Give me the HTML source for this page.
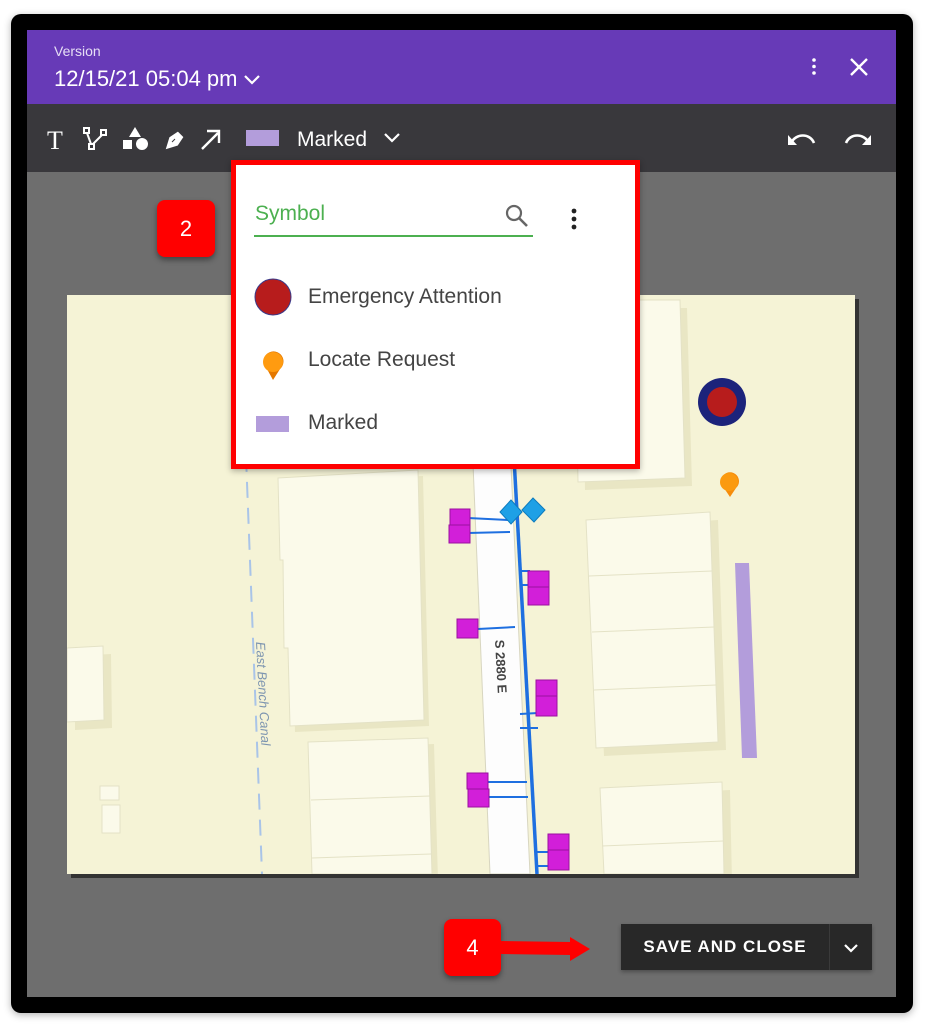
<!DOCTYPE html>
<html><head><meta charset="utf-8"><style>
*{margin:0;padding:0;box-sizing:border-box}
body{width:930px;height:1035px;background:#fff;position:relative;overflow:hidden;font-family:"Liberation Sans",sans-serif}
.a{position:absolute}
</style></head><body>
<div class="a" style="left:11px;top:14px;width:902px;height:999px;background:#000;border-radius:10px;box-shadow:0 2px 8px rgba(0,0,0,.3)"></div>
<div class="a" style="left:27px;top:30px;width:869px;height:74px;background:#673ab7"></div>
<div class="a" style="left:54px;top:43px;color:#e6def5;font-size:14px">Version</div>
<div class="a" style="left:54px;top:66px;color:#fff;font-size:22px">12/15/21 05:04 pm</div>
<svg class="a" style="left:0;top:0" width="930" height="1035">
 <polyline points="245,76 252,83 259,76" fill="none" stroke="#fff" stroke-width="2.2"/>
 <circle cx="814" cy="60" r="1.8" fill="#fff"/><circle cx="814" cy="66.5" r="1.8" fill="#fff"/><circle cx="814" cy="73" r="1.8" fill="#fff"/>
 <path d="M851 59 L867 75 M867 59 L851 75" stroke="#fff" stroke-width="2.4"/>
</svg>
<div class="a" style="left:27px;top:104px;width:869px;height:68px;background:#39383c"></div>
<div class="a" style="left:27px;top:172px;width:869px;height:825px;background:#6e6e6e"></div>
<svg class="a" style="left:0;top:0" width="930" height="1035">
 <text x="47" y="149" fill="#fff" font-family="Liberation Serif" font-size="26">T</text>
 <g stroke="#fff" stroke-width="2" fill="none"><rect x="84" y="128" width="5" height="5"/><rect x="101" y="130" width="5" height="5"/><rect x="89" y="144" width="5" height="5"/><path d="M87 133 L91 144 M93 144 L102 135"/></g>
 <path d="M135 127 L141 137 L129 137Z" fill="#fff"/><rect x="123" y="140" width="9" height="9" fill="#fff"/><circle cx="142" cy="144" r="6" fill="#fff"/>
 <path d="M165 150 L169 137 L178 131 L184 137 L178 146Z M172 142 L175 139" fill="#fff" stroke="#39383c" stroke-width="1"/>
 <path d="M202 149 L218 133 M207 131 L219 131 L219 143" stroke="#fff" stroke-width="2.4" fill="none"/>
 <rect x="246" y="130" width="33" height="16" fill="#b39ddb"/>
 <text x="297" y="146" fill="#fff" font-size="21">Marked</text>
 <polyline points="385,134 392,141 399,134" fill="none" stroke="#fff" stroke-width="2.2"/>
 <path d="M791 143 C796 133 810 133 814 143" stroke="#fff" stroke-width="2.6" fill="none"/><path d="M788 135 L788 145 L797 145Z" fill="#fff"/>
 <path d="M846 143 C850 133 864 133 869 143" stroke="#fff" stroke-width="2.6" fill="none"/><path d="M871 135 L871 145 L862 145Z" fill="#fff"/>
</svg>
<div class="a" style="left:71px;top:299px;width:788px;height:579px;background:#333"></div>
<svg class="a" style="left:67px;top:295px" width="788" height="579" viewBox="67 295 788 579">
 <rect x="67" y="295" width="788" height="579" fill="#f5f3d6"/>
 <g fill="#e9e6c4">
  <path d="M278 478 L418 470 L424 720 L290 726 L288 648 L284 648 L283 560 L280 560Z" transform="translate(5,6)"/>
  <path d="M308 742 L428 738 L432 874 L312 874Z" transform="translate(6,6)"/>
  <path d="M586 520 L710 512 L718 742 L596 748Z" transform="translate(8,8)"/>
  <path d="M600 788 L722 782 L724 874 L604 874Z" transform="translate(8,8)"/>
  <path d="M67 648 L103 646 L104 720 L67 722Z" transform="translate(8,8)"/>
  <path d="M575 300 L680 300 L685 478 L578 482Z" transform="translate(7,8)"/>
 </g>
 <g fill="#fbfaea" stroke="#e4e2c6" stroke-width="1">
  <path d="M278 478 L418 470 L424 720 L290 726 L288 648 L284 648 L283 560 L280 560Z"/>
  <path d="M308 742 L428 738 L432 874 L312 874Z"/><path d="M311 800 L430 796 M312 858 L431 854"/>
  <path d="M586 520 L710 512 L718 742 L596 748Z"/><path d="M589 576 L712 571 M592 632 L714 627 M594 690 L716 685"/>
  <path d="M600 788 L722 782 L724 874 L604 874Z"/><path d="M602 846 L723 841"/>
  <path d="M67 648 L103 646 L104 720 L67 722Z"/>
  <path d="M575 300 L680 300 L685 478 L578 482Z"/>
  <rect x="100" y="786" width="19" height="14"/><rect x="102" y="805" width="18" height="28"/>
 </g>
 <path d="M240 300 L262 874" stroke="#a9c4e8" stroke-width="2" stroke-dasharray="16,10"/>
 <text transform="translate(256,642) rotate(87)" fill="#7d95b0" font-size="13" font-style="italic">East Bench Canal</text>
 <path d="M466 295 L503 295 L530 874 L490 874Z" fill="#fdfdfd" stroke="#d8d6c0"/>
 <text transform="translate(495,640) rotate(87)" fill="#444" font-size="13" font-weight="bold">S 2880 E</text>
 <path d="M505 295 L537 874" stroke="#1e6fe0" stroke-width="3.5"/>
 <g stroke="#1e6fe0" stroke-width="2"><path d="M468 518 L508 520 M468 533 L510 532 M520 571 L530 571 M520 585 L530 585 M478 629 L515 627 M520 714 L538 713 M520 728 L538 728 M484 782 L527 782 M484 797 L528 797 M535 852 L548 852 M535 866 L548 866"/></g>
 <g fill="#d21fd9" stroke="#9a109f" stroke-width="1">
  <rect x="450" y="509" width="20" height="17"/><rect x="449" y="525" width="21" height="18"/>
  <rect x="528" y="571" width="21" height="16"/><rect x="528" y="587" width="21" height="18"/>
  <rect x="457" y="619" width="21" height="19"/>
  <rect x="536" y="680" width="21" height="16"/><rect x="536" y="696" width="21" height="20"/>
  <rect x="467" y="773" width="21" height="16"/><rect x="468" y="789" width="21" height="18"/>
  <rect x="548" y="834" width="21" height="16"/><rect x="548" y="850" width="21" height="20"/>
 </g>
 <path d="M511 500 L522 512 L511 524 L500 512Z M533 498 L545 510 L534 522 L522 510Z" fill="#1ea0e6" stroke="#0d7bbd"/>
 <circle cx="722" cy="402" r="24" fill="#1c237b"/><circle cx="722" cy="402" r="15" fill="#b71c1c"/>
 <path d="M730 497 L724 488 A9 9 0 1 1 736 488Z" fill="#f68c0c"/><circle cx="729" cy="482" r="9" fill="#fb9a10"/>
 <path d="M735 563 L749 563 L757 758 L742 758Z" fill="#b39ddb"/>
</svg>
<div class="a" style="left:231px;top:160px;width:409px;height:309px;border:5px solid #ff0000;background:#fff;box-shadow:0 2px 6px rgba(0,0,0,.3)"></div>
<div class="a" style="left:255px;top:202px;color:#4cb050;font-size:21px">Symbol</div>
<div class="a" style="left:254px;top:235px;width:279px;height:2px;background:#4cb050"></div>
<svg class="a" style="left:0;top:0" width="930" height="1035">
 <circle cx="514" cy="213" r="7" fill="none" stroke="#666" stroke-width="2.2"/><path d="M519 218 L527 226" stroke="#666" stroke-width="2.6"/>
 <circle cx="574" cy="211" r="2.4" fill="#222"/><circle cx="574" cy="219" r="2.4" fill="#222"/><circle cx="574" cy="227" r="2.4" fill="#222"/>
 <circle cx="273" cy="297" r="18" fill="#b71c1c" stroke="#3a3a8a" stroke-width="1"/>
 <path d="M273 380 L267 369 A10 10 0 1 1 280 369Z" fill="#e47800"/><circle cx="273" cy="362" r="10" fill="#ff9b10"/>
 <rect x="256" y="416" width="33" height="16" fill="#b39ddb"/>
</svg>
<div class="a" style="left:308px;top:285px;color:#444;font-size:21px">Emergency Attention</div>
<div class="a" style="left:308px;top:348px;color:#444;font-size:21px">Locate Request</div>
<div class="a" style="left:308px;top:411px;color:#444;font-size:21px">Marked</div>
<div class="a" style="left:157px;top:200px;width:58px;height:57px;background:#ff0000;border-radius:8px;color:#fff;font-size:22px;text-align:center;line-height:57px;box-shadow:0 3px 6px rgba(0,0,0,.4)">2</div>
<div class="a" style="left:444px;top:919px;width:57px;height:57px;background:#ff0000;border-radius:8px;color:#fff;font-size:22px;text-align:center;line-height:57px;box-shadow:0 3px 6px rgba(0,0,0,.4)">4</div>
<svg class="a" style="left:0;top:0" width="930" height="1035"><path d="M501 941 L570 942 L570 937 L590 949 L570 961 L570 955 L501 954Z" fill="#ff0000"/></svg>
<div class="a" style="left:621px;top:924px;width:251px;height:46px;background:#282828;box-shadow:0 2px 4px rgba(0,0,0,.3)"></div>
<div class="a" style="left:829px;top:924px;width:1px;height:46px;background:#3a3a3a"></div>
<div class="a" style="left:621px;top:924px;width:208px;height:46px;color:#fff;font-size:17px;font-weight:bold;letter-spacing:1px;text-align:center;line-height:46px">SAVE AND CLOSE</div>
<svg class="a" style="left:0;top:0" width="930" height="1035"><polyline points="845,945 851,951 857,945" fill="none" stroke="#fff" stroke-width="2.2"/></svg>
</body></html>
